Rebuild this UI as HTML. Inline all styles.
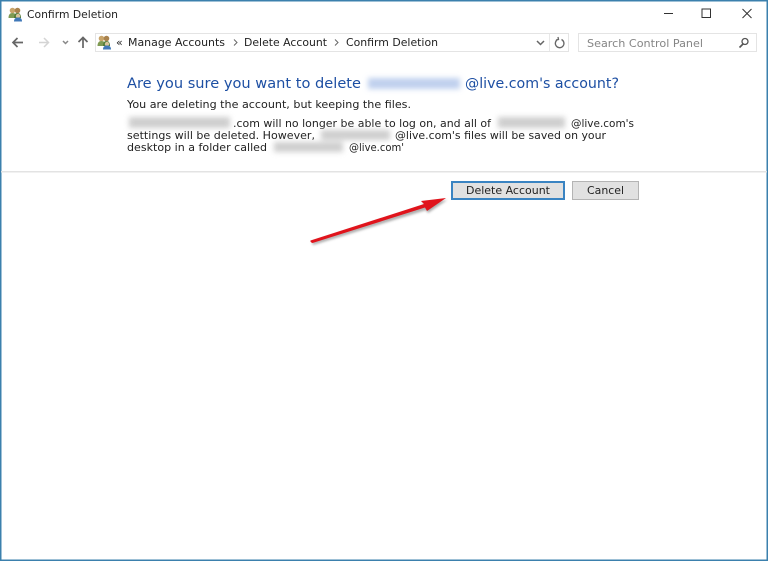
<!DOCTYPE html>
<html><head><meta charset="utf-8"><style>
html,body{margin:0;padding:0;background:#fff;width:768px;height:561px;overflow:hidden}
svg{display:block;position:absolute;left:0;top:0}
text{font-family:"DejaVu Sans","Liberation Sans",sans-serif;font-size:11px;fill:#222}
</style></head><body>
<svg width="768" height="561" viewBox="0 0 768 561" xmlns="http://www.w3.org/2000/svg">
<defs>
<filter id="b" x="-30%" y="-100%" width="160%" height="300%"><feGaussianBlur stdDeviation="2.6"/></filter>
<filter id="s" x="-10%" y="-30%" width="120%" height="160%"><feGaussianBlur stdDeviation="1.3"/></filter>
<filter id="t" x="-5%" y="-30%" width="110%" height="160%"><feGaussianBlur stdDeviation="0.3"/></filter>
<g id="users">
<circle cx="4.500" cy="3.500" r="2.800" fill="#c8a46a"/><path d="M0.500 11c0-3.500 1.500-5 4-5s4 1.500 4 5z" fill="#7f9a52"/>
<circle cx="9.500" cy="3.500" r="2.800" fill="#a9824e"/><path d="M6 11c0-3.500 1.300-5 3.500-5s3.500 1.500 3.500 5z" fill="#4f7a38"/>
<circle cx="10" cy="9" r="2.200" fill="#d8c39a"/><path d="M6 14.500c0-2.800 1.500-4 4-4s4 1.200 4 4z" fill="#3f78b8"/>
</g>
</defs>
<rect width="768" height="561" fill="#fff"/>
<rect x="0" y="0" width="768" height="1.500" fill="#3b80ad"/>
<rect x="0" y="0" width="1.500" height="561" fill="#3b80ad"/>
<rect x="766.500" y="0" width="1.500" height="561" fill="#3b80ad"/>
<rect x="0" y="559.500" width="768" height="1.500" fill="#3b80ad"/>

<g filter="url(#t)">
<use href="#users" x="8" y="7"/>
<text x="27" y="18" textLength="91" lengthAdjust="spacingAndGlyphs" fill="#333">Confirm Deletion</text>

<path d="M664 13.500h9" stroke="#333" stroke-width="1"/>
<rect x="702" y="9" width="8.500" height="8.500" fill="none" stroke="#333" stroke-width="1"/>
<path d="M742.500 9l9 9M751.500 9l-9 9" stroke="#333" stroke-width="1" fill="none"/>

<path d="M23 42.500h-10M17.500 38l-4.500 4.500 4.500 4.500" fill="none" stroke="#666" stroke-width="1.700"/>
<path d="M39 42.500h9M44 38l4.500 4.500L44 47" fill="none" stroke="#d4d4d4" stroke-width="1.500"/>
<path d="M63 41l2.500 2.500L68 41" fill="none" stroke="#888" stroke-width="1.500"/>
<path d="M83 48v-10.500M78.500 42l4.500-4.500 4.500 4.500" fill="none" stroke="#666" stroke-width="1.700"/>

<rect x="95.500" y="33.500" width="473" height="18" fill="#fff" stroke="#e4e4e4"/>
<path d="M549.500 34v17" stroke="#e8e8e8"/>
<use href="#users" x="97" y="35"/>
<text x="116" y="46" fill="#555" textLength="8">«</text>
<text x="128" y="46" textLength="97" lengthAdjust="spacingAndGlyphs">Manage Accounts</text>
<path d="M234 39.500l3 3-3 3" fill="none" stroke="#666"/>
<text x="244" y="46" textLength="83" lengthAdjust="spacingAndGlyphs">Delete Account</text>
<path d="M335 39.500l3 3-3 3" fill="none" stroke="#666"/>
<text x="346" y="46" textLength="92" lengthAdjust="spacingAndGlyphs">Confirm Deletion</text>
<path d="M537 41l3.500 3.500L544 41" fill="none" stroke="#666" stroke-width="1.500"/>
<path d="M561.500 39.500a4.300 4.300 0 1 1-3.200-.2M558 37l.5 2.500-2.500.5" fill="none" stroke="#666" stroke-width="1.300"/>

<rect x="578.500" y="33.500" width="178" height="18" fill="#fff" stroke="#e4e4e4"/>
<text x="587" y="47" textLength="116" lengthAdjust="spacingAndGlyphs" style="fill:#858585">Search Control Panel</text>
<circle cx="745" cy="41.500" r="3" fill="none" stroke="#555" stroke-width="1.300"/>
<path d="M743 44l-3.500 3.500" stroke="#555" stroke-width="1.600"/>

<text x="127" y="88" textLength="234" lengthAdjust="spacingAndGlyphs" style="font-size:14.500px;fill:#1f4fa3">Are you sure you want to delete</text>
<text x="465" y="88" textLength="154" lengthAdjust="spacingAndGlyphs" style="font-size:14.500px;fill:#1f4fa3">@live.com's account?</text>
<text x="127" y="108" textLength="284" lengthAdjust="spacingAndGlyphs">You are deleting the account, but keeping the files.</text>
<text x="233" y="127" textLength="258" lengthAdjust="spacingAndGlyphs">.com will no longer be able to log on, and all of</text>
<text x="571" y="127" textLength="63" lengthAdjust="spacingAndGlyphs">@live.com's</text>
<text x="127" y="139" textLength="188" lengthAdjust="spacingAndGlyphs">settings will be deleted. However,</text>
<text x="395" y="139" textLength="211" lengthAdjust="spacingAndGlyphs">@live.com's files will be saved on your</text>
<text x="127" y="151" textLength="140" lengthAdjust="spacingAndGlyphs">desktop in a folder called</text>
<text x="349" y="151" textLength="55" lengthAdjust="spacingAndGlyphs">@live.com'</text>
</g>

<g filter="url(#b)">
<rect x="368" y="78" width="92" height="11" fill="#c0d0ee"/>
<rect x="129" y="117" width="101" height="11" fill="#cfcfcf"/>
<rect x="498" y="117" width="67" height="11" fill="#cfcfcf"/>
<rect x="321" y="130" width="69" height="10" fill="#cfcfcf"/>
<rect x="274" y="142" width="69" height="10" fill="#cfcfcf"/>
</g>

<rect x="1" y="171" width="766" height="1.500" fill="#e3e3e3"/>

<rect x="452" y="182" width="112" height="17" fill="#e1e1e1" stroke="#3a84c2" stroke-width="2"/>
<text x="466" y="194" textLength="84" lengthAdjust="spacingAndGlyphs" fill="#333" filter="url(#t)">Delete Account</text>
<rect x="572.500" y="181.500" width="66" height="18" fill="#e1e1e1" stroke="#b4b4b4"/>
<text x="587" y="194" textLength="37" lengthAdjust="spacingAndGlyphs" fill="#333" filter="url(#t)">Cancel</text>

<g transform="translate(1,2)" opacity=".5" filter="url(#s)">
<path d="M311 240L424 204 421 201 446 198 427 211 425 208 312 243z" fill="#555"/>
</g>
<path d="M310.500 240.500L424 204 421 201 446 198 427 211 425 207.500 312.500 243 Q310 242 310.500 240.500z" fill="#e0141c"/>
</svg>
</body></html>
